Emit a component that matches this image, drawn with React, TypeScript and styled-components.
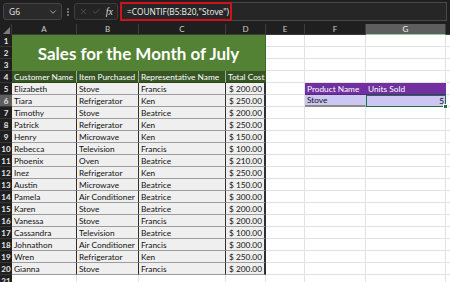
import styled, { createGlobalStyle } from 'styled-components';
import { ChevronDown, EllipsisVertical, X, Check } from 'lucide-react';

const GlobalStyle = createGlobalStyle`
  html, body { margin: 0; padding: 0; background: #ffffff; }
  body { width: 450px; height: 282px; overflow: hidden; font-family: Lato, "Liberation Sans", sans-serif; }
  * { box-sizing: border-box; }
`;

type Sale = [string, string, string, number];

const sales: Sale[] = [
  ['Elizabeth', 'Stove', 'Francis', 200],
  ['Tiara', 'Refrigerator', 'Ken', 250],
  ['Timothy', 'Stove', 'Beatrice', 200],
  ['Patrick', 'Refrigerator', 'Ken', 250],
  ['Henry', 'Microwave', 'Ken', 150],
  ['Rebecca', 'Television', 'Francis', 100],
  ['Phoenix', 'Oven', 'Beatrice', 210],
  ['Inez', 'Refrigerator', 'Ken', 250],
  ['Austin', 'Microwave', 'Beatrice', 150],
  ['Pamela', 'Air Conditioner', 'Beatrice', 300],
  ['Karen', 'Stove', 'Beatrice', 200],
  ['Vanessa', 'Stove', 'Francis', 200],
  ['Cassandra', 'Television', 'Beatrice', 100],
  ['Johnathon', 'Air Conditioner', 'Francis', 300],
  ['Wren', 'Refrigerator', 'Ken', 250],
  ['Gianna', 'Stove', 'Francis', 200],
];

const headers = ['Customer Name', 'Item Purchased', 'Representative Name', 'Total Cost'];
const letters = ['A', 'B', 'C', 'D', 'E', 'F', 'G', ''];
const ROWS = 21;

export default function App() {
  const cells: JSX.Element[] = [];

  for (let r = 1; r <= ROWS; r++) {
    cells.push(
      <RowHead key={`rh${r}`} $selected={r === 6}>
        {r}
      </RowHead>
    );
    for (let c = 1; c <= 8; c++) {
      const key = `${r}-${c}`;
      if (r <= 3 && c <= 4) {
        if (r === 1 && c === 1) {
          cells.push(<TitleCell key={key}>Sales for the Month of July</TitleCell>);
        }
        continue;
      }
      if (r === 4 && c <= 4) {
        cells.push(
          <HeadCell key={key} $last={c === 4}>
            {headers[c - 1]}
          </HeadCell>
        );
        continue;
      }
      if (r >= 5 && r <= 20 && c <= 4) {
        const row = sales[r - 5];
        if (c === 4) {
          cells.push(
            <MoneyCell key={key}>
              <span>$</span>
              <span>{row[3].toFixed(2)}</span>
            </MoneyCell>
          );
        } else {
          cells.push(<DataCell key={key}>{row[c - 1]}</DataCell>);
        }
        continue;
      }
      if (r === 5 && (c === 6 || c === 7)) {
        cells.push(<PurpleCell key={key}>{c === 6 ? 'Product Name' : 'Units Sold'}</PurpleCell>);
        continue;
      }
      if (r === 6 && c === 6) {
        cells.push(<LavenderCell key={key}>Stove</LavenderCell>);
        continue;
      }
      if (r === 6 && c === 7) {
        cells.push(
          <ActiveCell key={key}>
            5
            <FillHandle />
          </ActiveCell>
        );
        continue;
      }
      cells.push(<Cell key={key} />);
    }
  }

  return (
    <>
      <GlobalStyle />
      <Window>
        <FormulaBar>
          <NameBox>
            <span>G6</span>
            <ChevronDown size={10} strokeWidth={2} />
          </NameBox>
          <Grip>
            <EllipsisVertical size={10} strokeWidth={2.5} />
          </Grip>
          <ButtonGroup>
            <X size={11} strokeWidth={1.6} />
            <Check size={11} strokeWidth={1.6} />
            <Fx>fx</Fx>
          </ButtonGroup>
          <FormulaBox>
            <FormulaText>=COUNTIF(B5:B20,"Stove")</FormulaText>
            <FormulaRest />
          </FormulaBox>
        </FormulaBar>
        <Sheet>
          <Corner>
            <CornerMark />
          </Corner>
          {letters.map((l, i) => (
            <ColHead key={`ch${i}`} $selected={l === 'G'}>
              {l}
            </ColHead>
          ))}
          {cells}
        </Sheet>
      </Window>
    </>
  );
}

const Window = styled.div`
  display: flex;
  flex-direction: column;
  width: 450px;
  height: 282px;
  background: #ffffff;
`;

const FormulaBar = styled.div`
  display: flex;
  align-items: center;
  height: 25px;
  padding: 2px 3px 3px 3px;
  background: #1f1f1f;
  color: #e6e6e6;
  font-family: "Open Sans", "Noto Sans", sans-serif;
`;

const NameBox = styled.div`
  display: flex;
  align-items: center;
  justify-content: space-between;
  width: 59px;
  height: 17px;
  padding: 0 3px 0 5px;
  background: #2a2a2a;
  border: 1px solid #454545;
  border-radius: 3px;
  font-size: 8.5px;
  color: #e8e8e8;

  svg { color: #bdbdbd; }
`;

const Grip = styled.div`
  display: flex;
  align-items: center;
  justify-content: center;
  width: 12px;
  color: #9a9a9a;
`;

const ButtonGroup = styled.div`
  display: flex;
  align-items: center;
  gap: 4px;
  width: 44px;
  height: 17px;
  padding: 0 4px;
  background: #242424;
  border: 1px solid #3e3e3e;
  border-radius: 3px;
  color: #6a6a6a;
`;

const Fx = styled.span`
  font-family: "Liberation Serif", serif;
  font-style: italic;
  font-size: 10px;
  color: #dcdcdc;
  margin-left: 1px;
`;

const FormulaBox = styled.div`
  display: flex;
  flex: 1;
  height: 19px;
  margin-left: 2px;
  background: #262626;
  border: 1px solid #4a4a4a;
  border-left: none;
`;

const FormulaText = styled.div`
  display: flex;
  align-items: center;
  width: 112px;
  margin-top: -1px;
  height: 19px;
  padding-left: 5px;
  border: 2px solid #d0121b;
  border-radius: 2px;
  font-size: 8.3px;
  color: #f2f2f2;
  white-space: nowrap;
`;

const FormulaRest = styled.div`
  flex: 1;
`;

const Sheet = styled.div`
  display: grid;
  grid-template-columns: 12px 65px 62px 87px 40px 39px 61px 80px 1fr;
  grid-template-rows: 11px repeat(21, 12px);
  font-size: 8.3px;
  color: #111;
`;

const Corner = styled.div`
  position: relative;
  background: #1f1f1f;
  border-right: 1px solid #3a3a3a;
`;

const CornerMark = styled.div`
  position: absolute;
  right: 1px;
  bottom: 1px;
  width: 0;
  height: 0;
  border-left: 7px solid transparent;
  border-bottom: 7px solid #7a7a7a;
`;

const ColHead = styled.div<{ $selected?: boolean }>`
  display: flex;
  align-items: center;
  justify-content: center;
  background: ${(p) => (p.$selected ? '#5e5e5e' : '#1f1f1f')};
  border-right: 1px solid #3c3c3c;
  border-bottom: 1px solid ${(p) => (p.$selected ? '#8fd19e' : '#3c3c3c')};
  color: ${(p) => (p.$selected ? '#f4f4f4' : '#cfcfcf')};
  font-size: 8px;
`;

const RowHead = styled.div<{ $selected?: boolean }>`
  display: flex;
  align-items: center;
  justify-content: center;
  background: ${(p) => (p.$selected ? '#5e5e5e' : '#1f1f1f')};
  border-bottom: 1px solid #363636;
  color: #e6e6e6;
  font-size: 8px;
  font-weight: 700;
`;

const Cell = styled.div`
  display: flex;
  align-items: center;
  padding: 0 2px;
  white-space: nowrap;
  overflow: hidden;
  border-right: 1px solid #e2e2e2;
  border-bottom: 1px solid #e2e2e2;
`;

const TitleCell = styled.div`
  grid-column: 2 / span 4;
  grid-row: 2 / span 3;
  display: flex;
  align-items: center;
  justify-content: center;
  background: #548235;
  color: #ffffff;
  font-size: 17px;
  font-weight: 700;
  border-right: 1px solid #3f6a27;
`;

const HeadCell = styled(Cell)<{ $last?: boolean }>`
  background: #375623;
  color: #ffffff;
  border-right: 1px solid ${(p) => (p.$last ? '#375623' : '#9aae8c')};
  border-bottom: 1px solid #2b4419;
`;

const DataCell = styled(Cell)`
  background: #efefef;
  border-right: 1px solid #2f2f2f;
  border-bottom: 1px solid #9c9c9c;
`;

const MoneyCell = styled(DataCell)`
  justify-content: space-between;
  padding: 0 2px 0 3px;
  border-right: 2px solid #2f2f2f;
`;

const PurpleCell = styled(Cell)`
  background: #7030a0;
  color: #ffffff;
  border-right: 1px solid #7030a0;
  border-bottom: 1px solid #5a2485;
`;

const LavenderCell = styled(Cell)`
  background: #ccc6f2;
  border-right: 1px solid #ccc6f2;
  border-bottom: 2px solid #8a8a8a;
`;

const ActiveCell = styled(Cell)`
  position: relative;
  justify-content: flex-end;
  overflow: visible;
  background: #ccc6f2;
  border: 1px solid #1e7145;
  padding-right: 1px;
`;

const FillHandle = styled.span`
  position: absolute;
  right: -3px;
  bottom: -3px;
  width: 5px;
  height: 5px;
  background: #1e7145;
  border: 1px solid #ffffff;
`;
